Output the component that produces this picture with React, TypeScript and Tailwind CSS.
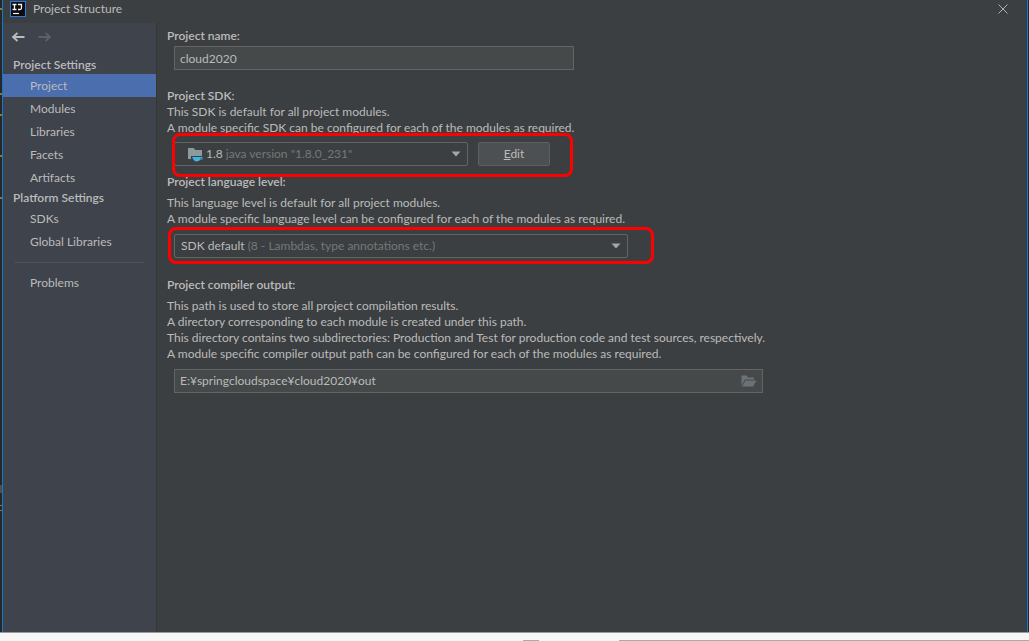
import type { ReactNode } from "react";

const projectItems = ["Project", "Modules", "Libraries", "Facets", "Artifacts"];
const platformItems = ["SDKs", "Global Libraries"];

function AppLogo() {
  return (
    <svg width="16" height="16" viewBox="0 0 16 16" aria-hidden="true">
      <rect x="0.5" y="0.5" width="15" height="15" fill="#0b0b0d" stroke="#2b7de0" />
      <path
        d="M2.5 3.5h4M4.500 3.500v5M2.500 8.500h4M8 3.500h3.500v3.500q0 1.500-1.500 1.500h-2"
        fill="none"
        stroke="#f2f2f2"
        strokeWidth="1.3"
      />
      <path d="M3 12.500h6" stroke="#f2f2f2" strokeWidth="1.2" />
    </svg>
  );
}

function Arrow({ flip = false }: { flip?: boolean }) {
  return (
    <svg width="14" height="12" viewBox="0 0 14 12" fill="none" stroke="currentColor" strokeWidth="1.8" aria-hidden="true">
      <path d={flip ? "M0.500 6h12M7.500 2L12 6L7.500 10" : "M13.500 6h-12M6.500 2L2 6L6.500 10"} />
    </svg>
  );
}

function Caret() {
  return (
    <svg className="ml-auto shrink-0" width="10" height="6" viewBox="0 0 10 6" aria-hidden="true">
      <path d="M0.500 0.500h9L5 5.500z" fill="#a4a6a8" />
    </svg>
  );
}

function SdkIcon() {
  return (
    <svg className="mr-[3px] shrink-0" width="16" height="16" viewBox="0 0 16 16" aria-hidden="true">
      <path d="M1 2h5.500l2 2H15v6H4v3H1z" fill="#8c999f" />
      <path
        d="M5 11h10.500v2.500h-2q-1.500 2-4 2t-4.500-4.500zM13.300 12v.7h1.200V12z"
        fill="#3fb3e3"
        fillRule="evenodd"
      />
    </svg>
  );
}

function OpenFolder() {
  return (
    <svg width="16" height="12" viewBox="0 0 16 12" aria-hidden="true">
      <path d="M0.500 0.500h5l1.500 2H13v2H4L0.500 10.500z" fill="#6a7276" />
      <path d="M4.500 5.500H15.500L12 11.500H1z" fill="#6a7276" />
    </svg>
  );
}

// sliver of the editor window that shows left of the dialog
function EditorSliver() {
  return (
    <svg className="shrink-0" width="2" height="632" viewBox="0 0 2 632" aria-hidden="true">
      <path d="M0 9h2M0 94h2M0 115h2M0 156h2M0 198h2" stroke="#8a7a42" strokeWidth="2" />
      <path d="M0 485h2v8H0z" fill="#4a4d4f" />
      <path d="M0 505.500h2M0 510.500h2" stroke="#77797b" />
    </svg>
  );
}

function NavItem({ name }: { name: string }) {
  const active = name === "Project";
  return (
    <li>
      <a
        href="#"
        aria-current={active ? "page" : undefined}
        className={active ? "block bg-[#4b6eaf] pl-[27px] leading-[23px]" : "block pl-[27px] leading-[23px]"}
      >
        {name}
      </a>
    </li>
  );
}

function SideHeading({ children }: { children: ReactNode }) {
  return <h2 className="pl-[10px] font-semibold leading-[18px]">{children}</h2>;
}

type ComboProps = {
  id: string;
  value: string;
  hint: string;
  className: string;
  icon?: ReactNode;
};

function Combo({ id, value, hint, className, icon }: ComboProps) {
  return (
    <div className={`flex h-6 items-center rounded-xs border border-[#646464] pr-[6px] ${className}`}>
      {icon}
      <select id={id} className="shrink-0 appearance-none bg-transparent outline-none [field-sizing:content]">
        <option>{value}</option>
      </select>
      <span className="ml-[3px] truncate text-[#777777]">{hint}</span>
      <Caret />
    </div>
  );
}

export default function App() {
  return (
    <div className="flex min-h-screen flex-col bg-[#f6f6f6] font-[Lato,'Noto_Sans',sans-serif] text-[12px] leading-4 text-[#bbbbbb]">
      <div className="flex grow border-b border-[#999999] bg-[#25282a] pr-px">
        <EditorSliver />
        <div className="flex grow flex-col border-x border-[#1878c8] bg-[#3c3f41]">
          <header className="flex h-[23px] items-start pl-[7px] pr-[19px] pt-px">
            <AppLogo />
            <h1 className="ml-[7px]">Project Structure</h1>
            <button aria-label="Close" className="ml-auto mt-[3px]">
              <svg width="10" height="10" viewBox="0 0 10 10" stroke="#b0b0b0" aria-hidden="true">
                <path d="M0.500 0.500l9 9M9.500 0.500l-9 9" />
              </svg>
            </button>
          </header>

          <div className="flex grow">
            <nav className="w-[154px] shrink-0 border-r border-[#353839] bg-[#3f434c]">
              <div className="flex h-[33px] gap-[13px] pl-2 pt-2">
                <button aria-label="Back" className="h-3 text-[#bbbbbb]">
                  <Arrow />
                </button>
                <button aria-label="Forward" disabled className="h-3 text-[#5d6064]">
                  <Arrow flip />
                </button>
              </div>
              <SideHeading>Project Settings</SideHeading>
              <ul>
                {projectItems.map((name) => (
                  <NavItem key={name} name={name} />
                ))}
              </ul>
              <SideHeading>Platform Settings</SideHeading>
              <ul>
                {platformItems.map((name) => (
                  <NavItem key={name} name={name} />
                ))}
              </ul>
              <hr className="mx-3 mb-2 mt-[9px] border-[#50535a]" />
              <ul>
                <NavItem name="Problems" />
              </ul>
            </nav>

            <main className="min-w-0 grow pl-[10px] pr-4 pt-[5px]">
              <label htmlFor="name" className="block font-semibold">
                Project name:
              </label>
              <input
                id="name"
                defaultValue="cloud2020"
                className="ml-[7px] mt-[2px] block h-6 w-full max-w-[400px] border border-[#646464] bg-[#45494a] px-[5px] outline-none"
              />

              <label htmlFor="sdk" className="mt-[18px] block font-semibold">
                Project SDK:
              </label>
              <p>
                This SDK is default for all project modules.
                <br />
                A module specific SDK can be configured for each of the modules as required.
              </p>
              <div className="relative ml-[7px] mt-[6px] flex w-fit gap-[10px]">
                <Combo
                  id="sdk"
                  value="1.8"
                  hint={'java version "1.8.0_231"'}
                  className="w-[294px] pl-3"
                  icon={<SdkIcon />}
                />
                <button className="h-6 w-[72px] rounded-xs border border-[#5e6060] bg-[#4c5052]">
                  <span className="underline">E</span>dit
                </button>
                <div className="pointer-events-none absolute -bottom-[11px] -left-[2px] -right-[23px] -top-[9px] rounded-lg border-3 border-[#ff0000]" />
              </div>

              <label htmlFor="level" className="mt-2 block font-semibold">
                Project language level:
              </label>
              <p className="mt-[5px]">
                This language level is default for all project modules.
                <br />
                A module specific language level can be configured for each of the modules as required.
              </p>
              <div className="relative ml-[7px] mt-[7px] w-fit">
                <Combo
                  id="level"
                  value="SDK default"
                  hint="(8 - Lambdas, type annotations etc.)"
                  className="w-[454px] pl-[6px]"
                />
                <div className="pointer-events-none absolute -bottom-[6px] -left-[6px] -right-[26px] -top-[7px] rounded-lg border-3 border-[#ff0000]" />
              </div>

              <label htmlFor="output" className="mt-[19px] block font-semibold">
                Project compiler output:
              </label>
              <p className="mt-[5px]">
                This path is used to store all project compilation results.
                <br />
                A directory corresponding to each module is created under this path.
                <br />
                This directory contains two subdirectories: Production and Test for production code and test sources,
                respectively.
                <br />
                A module specific compiler output path can be configured for each of the modules as required.
              </p>
              <div className="ml-[7px] mt-[7px] flex h-6 max-w-[589px] items-center border border-[#646464] bg-[#45494a] px-[5px]">
                <input
                  id="output"
                  defaultValue="E:¥springcloudspace¥cloud2020¥out"
                  className="min-w-0 grow bg-transparent outline-none"
                />
                <button aria-label="Browse">
                  <OpenFolder />
                </button>
              </div>
            </main>
          </div>
        </div>
      </div>

      <footer className="flex h-2 items-end">
        <div className="ml-[523px] h-px w-4 bg-[#aaaaaa]" />
        <div className="ml-[80px] h-px grow bg-[#aaaaaa]" />
      </footer>
    </div>
  );
}
